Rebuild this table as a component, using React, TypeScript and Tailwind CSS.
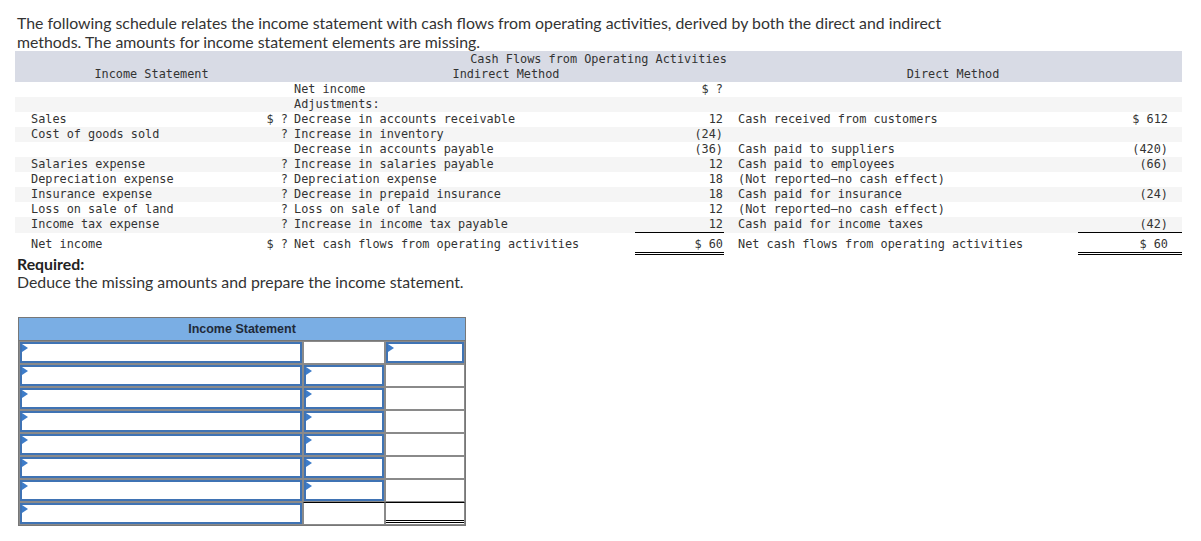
import React from "react";

type Row = {
  label?: string;
  q?: string;
  desc?: string;
  amt?: string;
  ddesc?: string;
  damt?: string;
};

const rows: Row[] = [
  { desc: "Net income", amt: "$ ?" },
  { desc: "Adjustments:" },
  { label: "Sales", q: "$ ?", desc: "Decrease in accounts receivable", amt: "12", ddesc: "Cash received from customers", damt: "$ 612" },
  { label: "Cost of goods sold", q: "?", desc: "Increase in inventory", amt: "(24)" },
  { desc: "Decrease in accounts payable", amt: "(36)", ddesc: "Cash paid to suppliers", damt: "(420)" },
  { label: "Salaries expense", q: "?", desc: "Increase in salaries payable", amt: "12", ddesc: "Cash paid to employees", damt: "(66)" },
  { label: "Depreciation expense", q: "?", desc: "Depreciation expense", amt: "18", ddesc: "(Not reported—no cash effect)" },
  { label: "Insurance expense", q: "?", desc: "Decrease in prepaid insurance", amt: "18", ddesc: "Cash paid for insurance", damt: "(24)" },
  { label: "Loss on sale of land", q: "?", desc: "Loss on sale of land", amt: "12", ddesc: "(Not reported—no cash effect)" },
  { label: "Income tax expense", q: "?", desc: "Increase in income tax payable", amt: "12", ddesc: "Cash paid for income taxes", damt: "(42)" },
];

const grid = "grid grid-cols-[243px_30px_347px_89px_354px_104px]";

function Flag() {
  return (
    <span className="absolute left-0 top-0 w-0 h-0 border-t-[4px] border-b-[4px] border-l-[6px] border-t-transparent border-b-transparent border-l-[#3d7cc9]" />
  );
}

function Cell({ input, className = "" }: { input?: boolean; className?: string }) {
  return (
    <div className={`h-[23px] border border-[#8a8a8a] ${className}`}>
      {input && (
        <div className="relative h-full border-2 border-[#3f73b4] bg-white">
          <Flag />
        </div>
      )}
    </div>
  );
}

export default function App() {
  return (
    <div className="w-[1201px] h-[541px] bg-white text-[#222] overflow-hidden">
      <div className="pt-[13px] px-[17px] font-['Lato','Liberation_Sans',sans-serif] text-[15.85px] leading-[19px] text-[#333]">
        <p className="w-[960px]">
          The following schedule relates the income statement with cash flows from operating activities, derived by both the direct and indirect
          <br />
          methods. The amounts for income statement elements are missing.
        </p>
      </div>

      {/* schedule */}
      <div className="ml-[15px] w-[1167px] font-['DejaVu_Sans_Mono',monospace] text-[11.85px] leading-[15px] text-[#333] whitespace-pre">
        <div className="bg-[#d8dbe5] h-[31px]">
          <div className="text-center h-[15px] pt-[1px]">Cash Flows from Operating Activities</div>
          <div className={`${grid} h-[15px] pt-[1px]`}>
            <div className="col-span-2 text-center">Income Statement</div>
            <div className="col-span-2 text-center">Indirect Method</div>
            <div className="col-span-2 text-center">Direct Method</div>
          </div>
        </div>
        {rows.map((r, i) => (
          <div
            key={i}
            className={`${grid} ${i % 2 === 1 ? "bg-[#f5f5f5]" : "bg-white"} ${i === rows.length - 1 ? "h-[16px]" : "h-[15px]"}`}
          >
            <div className="pl-[16px]">{r.label}</div>
            <div className="text-right">{r.q}</div>
            <div className="pl-[6px]">{r.desc}</div>
            <div className={`text-right pr-[1px] ${i === rows.length - 1 ? "border-b border-black" : ""}`}>{r.amt}</div>
            <div className="pl-[14px]">{r.ddesc}</div>
            <div className={`text-right pr-[14px] ${i === rows.length - 1 ? "border-b border-black" : ""}`}>{r.damt}</div>
          </div>
        ))}
        <div className={`${grid} h-[22px] pt-[4px]`}>
          <div className="pl-[16px]">Net income</div>
          <div className="text-right">$ ?</div>
          <div className="pl-[6px]">Net cash flows from operating activities</div>
          <div className="text-right pr-[1px] border-b-[3px] border-double border-black">$ 60</div>
          <div className="pl-[14px]">Net cash flows from operating activities</div>
          <div className="text-right pr-[14px] border-b-[3px] border-double border-black">$ 60</div>
        </div>
      </div>

      <div className="px-[17px] font-['Lato','Liberation_Sans',sans-serif] text-[15.85px] leading-[18px] text-[#333]">
        <div className="font-bold text-[#222]">Required:</div>
        <div>Deduce the missing amounts and prepare the income statement.</div>
      </div>

      {/* answer table */}
      <div className="mt-[26px] ml-[18px] w-[448px] border border-[#777]">
        <div className="h-[23px] bg-[#7aaee4] border-b border-[#777] text-center font-['Liberation_Sans',sans-serif] text-[12.5px] font-bold leading-[23px] text-[#1f2a3a]">
          Income Statement
        </div>
        <div className="grid grid-cols-[284px_82px_80px]">
          <Cell input />
          <Cell />
          <Cell input />
          {[0, 1, 2, 3, 4, 5].map((k) => (
            <React.Fragment key={k}>
              <Cell input />
              <Cell input />
              <Cell />
            </React.Fragment>
          ))}
          <Cell input />
          <Cell className="border-t-black" />
          <div className="h-[23px] border border-[#8a8a8a] border-t-black">
            <div className="mt-[17px] border-b-[3px] border-double border-black" />
          </div>
        </div>
      </div>
    </div>
  );
}
